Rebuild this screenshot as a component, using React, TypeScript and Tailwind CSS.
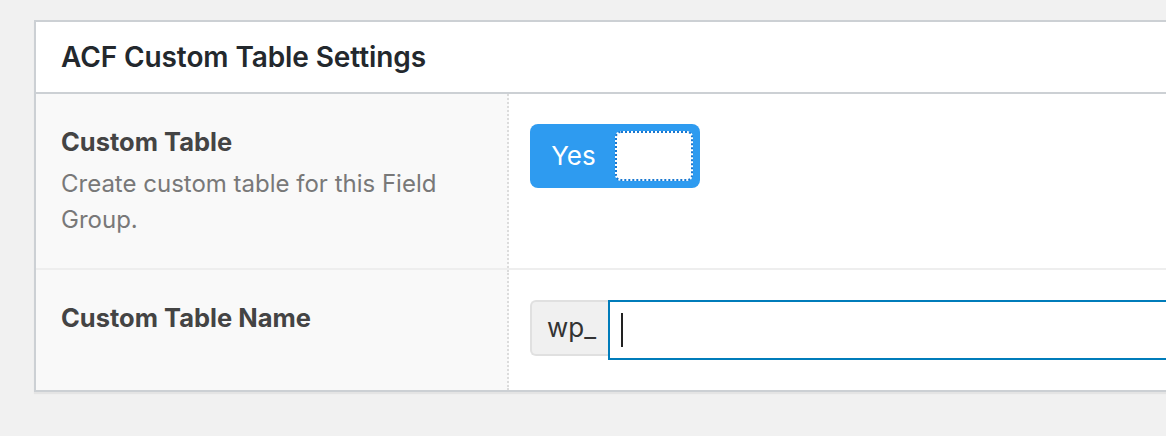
import React from "react";

export default function App() {
  const font = { fontFamily: "Inter, 'Noto Sans', 'Liberation Sans', sans-serif" };
  return (
    <div
      className="w-[1166px] h-[436px] overflow-hidden bg-[#f1f1f1] pt-[20px] pl-[34px] antialiased"
      style={font}
    >
      <div className="w-[1200px] bg-white border-2 border-[#ccd0d4] shadow-[0_2px_1px_rgba(0,0,0,0.05)]">
        {/* Header */}
        <div className="h-[72px] flex items-center pl-[25px] border-b-2 border-[#ccd0d4]">
          <h2 className="text-[28px] leading-none font-semibold text-[#23282d] tracking-[-0.1px]">
            ACF Custom Table Settings
          </h2>
        </div>

        {/* Row 1 */}
        <div className="flex border-b-2 border-[#eeeeee]">
          <div className="w-[473px] shrink-0 bg-[#f9f9f9] border-r-2 border-dotted border-[#dcdcdc] pl-[25px] pt-[30px] pb-[30px]">
            <div className="text-[25.5px] leading-[36px] font-bold text-[#444444]">Custom Table</div>
            <p className="mt-[6px] text-[24px] leading-[36px] text-[#787878] w-[420px]">
              Create custom table for this Field Group.
            </p>
          </div>
          <div className="pl-[21px] pt-[30px]">
            <div className="w-[170px] h-[64px] rounded-[8px] bg-[#2e9bf0] flex items-center pl-[7px] pr-[7px]">
              <span className="flex-1 text-center text-white text-[26px] leading-none pr-[5px]">Yes</span>
              <div className="w-[78px] h-[50px] rounded-[6px] bg-white border-2 border-dotted border-[#1a78d0]"></div>
            </div>
          </div>
        </div>

        {/* Row 2 */}
        <div className="flex">
          <div className="w-[473px] shrink-0 bg-[#f9f9f9] border-r-2 border-dotted border-[#dcdcdc] pl-[25px] pt-[30px] pb-[30px]">
            <div className="text-[25.5px] leading-[36px] font-bold text-[#444444]">Custom Table Name</div>
          </div>
          <div className="pl-[21px] pt-[30px] pb-[30px] flex-1">
            <div className="flex items-start">
              <div className="w-[78px] h-[56px] bg-[#f0f0f0] border-2 border-r-0 border-[#e0e0e0] rounded-l-[6px] flex items-center pl-[15px] text-[26px] text-[#333333] leading-none">
                wp_
              </div>
              <div className="flex-1 h-[60px] border-2 border-[#007cba] bg-white flex items-center pl-[11px]">
                <span className="block w-[2px] h-[34px] bg-[#222222]"></span>
              </div>
            </div>
          </div>
        </div>
      </div>
    </div>
  );
}
